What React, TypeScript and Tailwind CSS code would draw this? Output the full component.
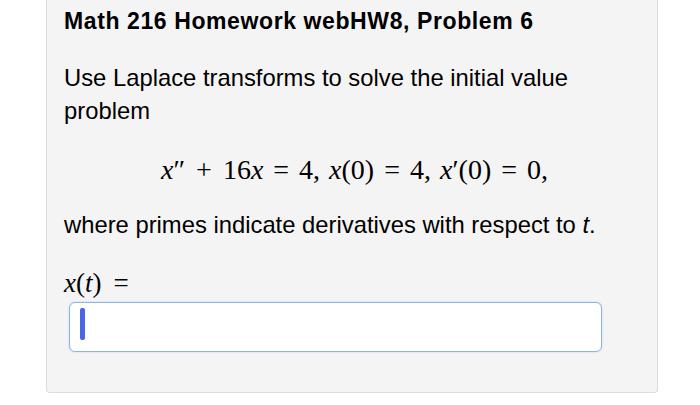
export default function App() {
  return (
    <div className="h-[405px] w-[700px] bg-white font-['Liberation_Sans',Arial,sans-serif] text-black">
      <div className="ml-[46px] h-[393px] w-[612px] rounded-b-[4px] border-x border-b border-[#dcdcdc] bg-[#f4f4f4] pl-[17px] pr-[16px]">
        <h1 className="pt-[7px] text-[23px] font-bold leading-[28px] tracking-[0.6px]">
          Math 216 Homework webHW8, Problem 6
        </h1>
        <p className="mt-[26px] text-[23.8px] leading-[33px]">
          Use Laplace transforms to solve the initial value
          <br />
          problem
        </p>
        <div className="mt-[25px] flex justify-center font-['Liberation_Serif','Times_New_Roman',serif] text-[28px] leading-[36px]">
          <span className="pl-[4px]">
            <i>x</i>″<span className="mx-[11px]">+</span>16<i>x</i>
            <span className="mx-[10px]">=</span>4,
            <i className="ml-[9px]">x</i>(0)<span className="mx-[10px]">=</span>4,
            <i className="ml-[9px]">x</i>′(0)<span className="mx-[10px]">=</span>0,
          </span>
        </div>
        <p className="mt-[22px] text-[23.8px] leading-[30px]">
          where primes indicate derivatives with respect to <i>t</i>.
        </p>
        <div className="mt-[27px] font-['Liberation_Serif','Times_New_Roman',serif] text-[27px] leading-[32px]">
          <i>x</i>(<i>t</i>)<span className="ml-[12px]">=</span>
        </div>
        <div className="ml-[5px] mt-[3px] flex h-[50px] w-[533px] items-start rounded-[6px] border border-[#8fb4e3] bg-white px-[10px] pt-[5px] shadow-[0_0_2px_#b9d2f0]">
          <span className="h-[32px] w-[5px] rounded-[2px] bg-[#4a66e6]" />
        </div>
      </div>
    </div>
  );
}
